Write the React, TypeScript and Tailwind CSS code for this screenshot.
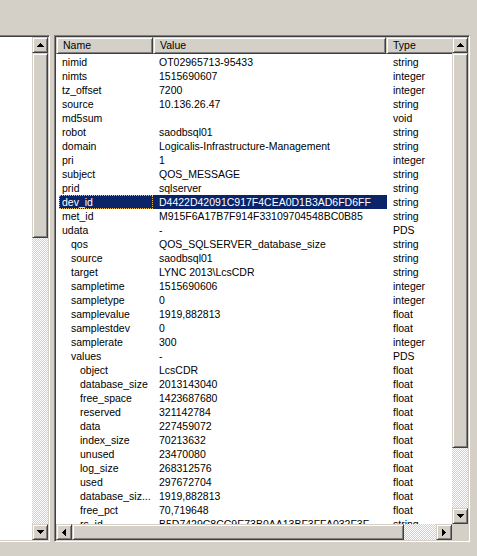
import React from "react";

type Row = { name: string; value: string; type: string; level: number; selected?: boolean };

const rows: Row[] = [
  { name: "nimid", value: "OT02965713-95433", type: "string", level: 0 },
  { name: "nimts", value: "1515690607", type: "integer", level: 0 },
  { name: "tz_offset", value: "7200", type: "integer", level: 0 },
  { name: "source", value: "10.136.26.47", type: "string", level: 0 },
  { name: "md5sum", value: "", type: "void", level: 0 },
  { name: "robot", value: "saodbsql01", type: "string", level: 0 },
  { name: "domain", value: "Logicalis-Infrastructure-Management", type: "string", level: 0 },
  { name: "pri", value: "1", type: "integer", level: 0 },
  { name: "subject", value: "QOS_MESSAGE", type: "string", level: 0 },
  { name: "prid", value: "sqlserver", type: "string", level: 0 },
  { name: "dev_id", value: "D4422D42091C917F4CEA0D1B3AD6FD6FF", type: "string", level: 0, selected: true },
  { name: "met_id", value: "M915F6A17B7F914F33109704548BC0B85", type: "string", level: 0 },
  { name: "udata", value: "-", type: "PDS", level: 0 },
  { name: "qos", value: "QOS_SQLSERVER_database_size", type: "string", level: 1 },
  { name: "source", value: "saodbsql01", type: "string", level: 1 },
  { name: "target", value: "LYNC 2013\\LcsCDR", type: "string", level: 1 },
  { name: "sampletime", value: "1515690606", type: "integer", level: 1 },
  { name: "sampletype", value: "0", type: "integer", level: 1 },
  { name: "samplevalue", value: "1919,882813", type: "float", level: 1 },
  { name: "samplestdev", value: "0", type: "float", level: 1 },
  { name: "samplerate", value: "300", type: "integer", level: 1 },
  { name: "values", value: "-", type: "PDS", level: 1 },
  { name: "object", value: "LcsCDR", type: "float", level: 2 },
  { name: "database_size", value: "2013143040", type: "float", level: 2 },
  { name: "free_space", value: "1423687680", type: "float", level: 2 },
  { name: "reserved", value: "321142784", type: "float", level: 2 },
  { name: "data", value: "227459072", type: "float", level: 2 },
  { name: "index_size", value: "70213632", type: "float", level: 2 },
  { name: "unused", value: "23470080", type: "float", level: 2 },
  { name: "log_size", value: "268312576", type: "float", level: 2 },
  { name: "used", value: "297672704", type: "float", level: 2 },
  { name: "database_siz...", value: "1919,882813", type: "float", level: 2 },
  { name: "free_pct", value: "70,719648", type: "float", level: 2 },
  { name: "rs_id", value: "B5D7429C8CC9E73B0AA13BF3FFA032F3F", type: "string", level: 2 },
];

const raised =
  "bg-[#d4d0c8] border border-t-[#d4d0c8] border-l-[#d4d0c8] border-r-[#404040] border-b-[#404040] shadow-[inset_1px_1px_#fff,inset_-1px_-1px_#808080]";
const checker = "bg-[repeating-conic-gradient(#d4d0c8_0%_25%,#fff_0%_50%)] bg-[length:2px_2px]";
const sunken =
  "border border-t-[#808080] border-l-[#808080] border-r-white border-b-white p-px shadow-[inset_1px_1px_#404040,inset_-1px_-1px_#d4d0c8]";

function Arrow({ dir }: { dir: "up" | "down" | "left" | "right" }) {
  const pts = {
    up: "3.5,0 7,4 0,4",
    down: "0,0 7,0 3.5,4",
    left: "4,0 4,7 0,3.5",
    right: "0,0 4,3.5 0,7",
  }[dir];
  const vertical = dir === "up" || dir === "down";
  return (
    <div className={`${raised} w-[16px] h-[16px] shrink-0 flex items-center justify-center`}>
      <svg width={vertical ? 7 : 4} height={vertical ? 4 : 7} shapeRendering="crispEdges">
        <polygon points={pts} fill="#000" />
      </svg>
    </div>
  );
}

function VScroll({ thumb }: { thumb: string }) {
  return (
    <div className="w-[16px] flex flex-col shrink-0">
      <Arrow dir="up" />
      <div className={`${raised} ${thumb} shrink-0`} />
      <div className={`flex-1 ${checker}`} />
      <Arrow dir="down" />
    </div>
  );
}

const indent = ["pl-[3px]", "pl-[12px]", "pl-[21px]"];

export default function App() {
  return (
    <div className="w-[477px] h-[556px] overflow-hidden bg-[#d4d0c8] pt-[35px] font-['Liberation_Sans',Arial,sans-serif] text-[10.5px] text-black">
      <div className="flex h-[507px]">
        {/* left tree pane */}
        <div className={`${sunken} ml-[-2px] w-[52px] flex shrink-0`}>
          <div className="flex-1 bg-white" />
          <VScroll thumb="h-[185px]" />
        </div>

        {/* right property list */}
        <div className={`${sunken} ml-[4px] w-[416px] flex flex-col shrink-0`}>
          <div className="flex flex-1 min-h-0">
            <div className="flex-1 min-w-0 bg-white overflow-hidden flex flex-col">
              <div className="flex h-[17px] shrink-0 leading-[15px]">
                <div className={`${raised} w-[97px] shrink-0 pl-[6px]`}>Name</div>
                <div className={`${raised} w-[233px] shrink-0 pl-[6px]`}>Value</div>
                <div className={`${raised} w-[120px] shrink-0 pl-[6px]`}>Type</div>
              </div>
              <div className="flex flex-col pt-px">
                {rows.map((r, i) => (
                  <div key={i} className="flex h-[14px] leading-[14px] whitespace-nowrap pl-[3px]">
                    <div
                      className={`w-[94px] shrink-0 overflow-hidden ${indent[r.level]} ${
                        r.selected ? "bg-[#0a246a] text-white outline outline-1 outline-dotted outline-offset-[-1px] outline-[#f0c060]" : ""
                      }`}
                    >
                      {r.name}
                    </div>
                    <div
                      className={`w-[234px] shrink-0 overflow-hidden pl-[6px] ${
                        r.selected ? "bg-[#0a246a] text-white" : ""
                      }`}
                    >
                      {r.value}
                    </div>
                    <div className="shrink-0 pl-[6px]">{r.type}</div>
                  </div>
                ))}
              </div>
            </div>
            <VScroll thumb="h-[395px]" />
          </div>
          <div className="flex h-[16px] shrink-0">
            <Arrow dir="left" />
            <div className={`${raised} w-[332px] shrink-0`} />
            <div className={`flex-1 ${checker}`} />
            <Arrow dir="right" />
            <div className="w-[16px] shrink-0 bg-[#d4d0c8]" />
          </div>
        </div>
      </div>
    </div>
  );
}
